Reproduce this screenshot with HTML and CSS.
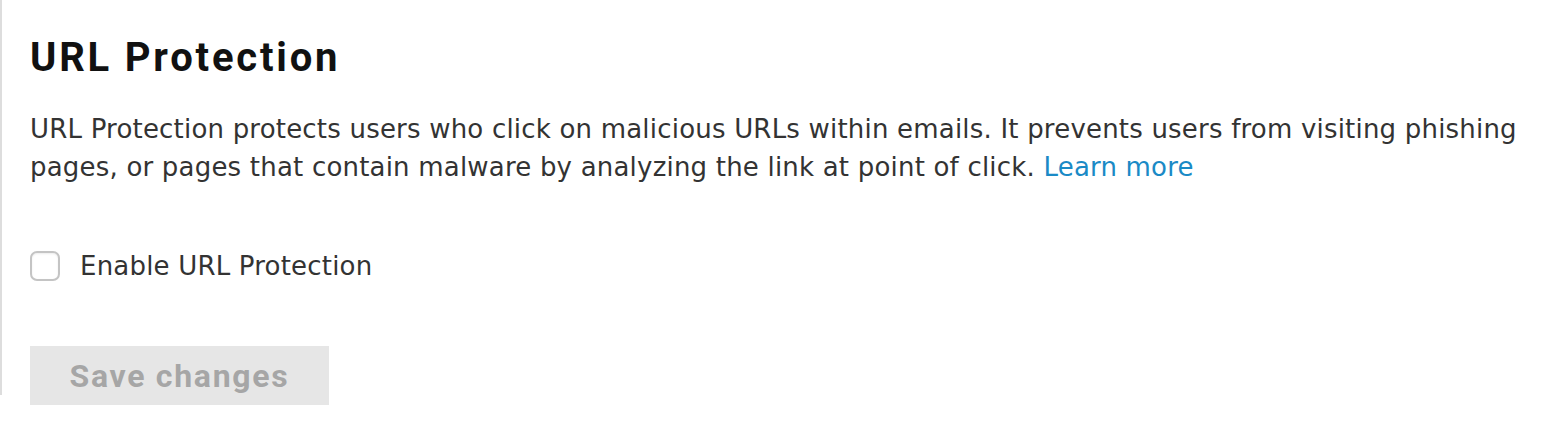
FILE: index.html
```html
<!DOCTYPE html>
<html>
<head>
<meta charset="utf-8">
<link rel="stylesheet" href="styles.css">
</head>
<body>
<div class="panel">
  <h1 class="title">URL Protection</h1>
  <p class="desc">URL Protection protects users who click on malicious URLs within emails. It prevents users from visiting phishing pages, or pages that contain malware by analyzing the link at point of click. <a class="link" href="#">Learn more</a></p>
  <label class="check-row"><span class="checkbox"></span><span class="check-label">Enable URL Protection</span></label>
  <button class="save" type="button">Save changes</button>
</div>
</body>
</html>
```
FILE: styles.css
```css
html, body {
  margin: 0;
  padding: 0;
  background: #fff;
}
.panel {
  position: relative;
  padding: 0 0 20px 30px;
}
.panel::before {
  content: "";
  position: absolute;
  left: 0;
  top: 0;
  width: 2px;
  height: 395px;
  background: #dddddd;
}
.title {
  margin: 0;
  padding-top: 35px;
  font-family: Roboto, "Liberation Sans", sans-serif;
  font-weight: 700;
  font-size: 40px;
  line-height: 46px;
  letter-spacing: 2.8px;
  color: #111;
}
.desc {
  margin: 29px 0 0 0;
  font-family: "DejaVu Sans", sans-serif;
  font-size: 26px;
  line-height: 38px;
  letter-spacing: 0.2px;
  color: #333;
  width: 1505px;
}
.link {
  color: #1a8ac6;
  text-decoration: none;
}
.check-row {
  display: flex;
  align-items: center;
  gap: 20px;
  margin-top: 65px;
}
.checkbox {
  width: 26px;
  height: 26px;
  border: 2px solid #c4c4c4;
  border-radius: 7px;
  box-shadow: inset 0 1px 2px rgba(0,0,0,0.08);
  background: #fff;
  flex: none;
}
.check-label {
  font-family: "DejaVu Sans", sans-serif;
  font-size: 26px;
  letter-spacing: 0.2px;
  color: #333;
}
.save {
  display: block;
  margin-top: 65px;
  width: 299px;
  height: 59px;
  border: none;
  background: #e6e6e6;
  color: #a6a6a6;
  font-family: Roboto, "Liberation Sans", sans-serif;
  font-weight: 700;
  font-size: 32px;
  letter-spacing: 1.7px;
  padding: 0;
}
```
